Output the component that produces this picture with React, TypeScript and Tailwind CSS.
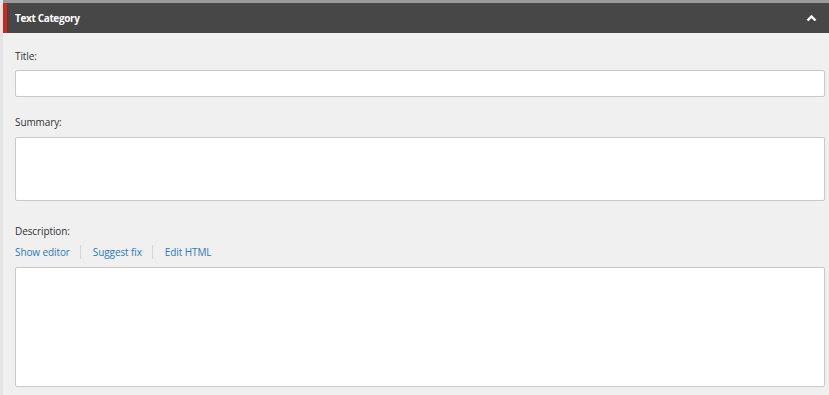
export default function App() {
  return (
    <div
      className="flex h-[395px] w-full bg-[#f0f0f0] text-[10px] tracking-[-0.1px] text-[#333]"
      style={{ fontFamily: '"Open Sans", "Liberation Sans", sans-serif' }}
    >
      {/* left edge */}
      <div className="w-[3px] shrink-0 bg-[#e4e4e4]"></div>

      <div className="flex min-w-0 flex-1 flex-col">
        {/* Header */}
        <div className="border-t-[3px] border-[#9a9a9a]">
          <div className="flex h-[30px] items-center border-l-[4px] border-[#d3261d] bg-[#474747] pl-[8px] pr-[10px]">
            <span className="flex-1 font-bold tracking-[-0.35px] text-white">Text Category</span>
            <svg width="11" height="8" viewBox="0 0 11 8" className="mr-[2px]">
              <path d="M1.5 6.5 L5.5 2.5 L9.5 6.5" stroke="#fff" strokeWidth="2.4" fill="none" />
            </svg>
          </div>
        </div>

        {/* Fields */}
        <div className="flex flex-col pl-[12px] pr-[4px]">
          <label className="mt-[15px] leading-[16px]">Title:</label>
          <div className="mt-[6px] h-[27px] rounded-[2px] border border-[#c9c9c9] bg-white"></div>

          <label className="mt-[17px] leading-[16px]">Summary:</label>
          <div className="mt-[7px] h-[64px] rounded-[2px] border border-[#c9c9c9] bg-white"></div>

          <label className="mt-[22px] leading-[16px]">Description:</label>
          <div className="mt-[5px] flex items-center leading-[16px] text-[#2d7bb8]">
            <span>Show editor</span>
            <span className="ml-[10px] mr-[12px] h-[14px] w-px bg-[#d5d5d5]"></span>
            <span>Suggest fix</span>
            <span className="ml-[10px] mr-[12px] h-[14px] w-px bg-[#d5d5d5]"></span>
            <span>Edit HTML</span>
          </div>
          <div className="mt-[7px] h-[120px] rounded-[2px] border border-[#c9c9c9] bg-white"></div>
        </div>
      </div>
    </div>
  );
}
